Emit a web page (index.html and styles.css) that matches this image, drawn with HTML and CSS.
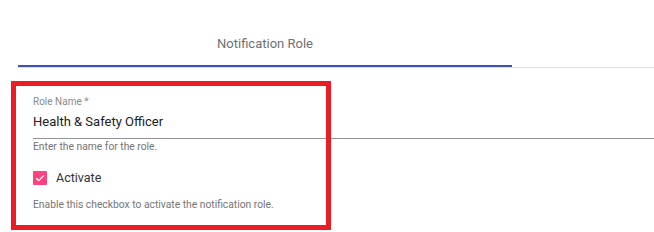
FILE: index.html
```html
<!DOCTYPE html>
<html>
<head>
<title>Notification Role</title>
<link rel="stylesheet" href="styles.css">
</head>
<body>
<div class="tabs">
  <div class="tab active">Notification Role</div>
</div>

<form class="role-form">
  <div class="field">
    <label class="field-label" for="role_name">Role Name *</label>
    <input type="text" id="role_name" class="field-input" value="Health &amp; Safety Officer">
    <div class="hint">Enter the name for the role.</div>
  </div>

  <label class="check">
    <span class="check-box">
      <svg width="10" height="10" viewBox="0 0 10 10"><path d="M1.2 5.2 L3.8 7.6 L8.8 2.4" fill="none" stroke="#fff" stroke-width="1.3"/></svg>
    </span>
    <span class="check-text">Activate</span>
  </label>
  <div class="hint">Enable this checkbox to activate the notification role.</div>
</form>

<!-- annotation around the form -->
<div class="highlight"></div>
</body>
</html>
```

FILE: styles.css
```css
body {
  margin: 0;
  font-family: Roboto, "Liberation Sans", sans-serif;
  background-color: #fff;
}

.tabs {
  display: flex;
  margin-left: 18px;
  border-bottom: 1px solid #e0e0e0;
}

.tab {
  width: 494px;
  height: 67px;
  box-sizing: border-box;
  display: flex;
  align-items: flex-end;
  justify-content: center;
  padding-bottom: 14px;
  font-size: 13px;
  color: #6f6f6f;
}

.tab.active {
  border-bottom: 2px solid #3f51b5;
}

.role-form {
  padding: 28px 0 0 33px;
}

.field-label {
  display: block;
  font-size: 10px;
  color: #8a8a8a;
  line-height: 12px;
}

.field-input {
  display: block;
  width: 100%;
  box-sizing: border-box;
  margin: 2px 0 0;
  padding: 4px 0 9px;
  border: none;
  border-bottom: 1px solid #949494;
  font-family: inherit;
  font-size: 13px;
  color: #212121;
  outline: none;
  background: none;
}

.hint {
  font-size: 10.3px;
  line-height: 12px;
  color: #757575;
  margin-top: 2px;
}

.check {
  display: flex;
  align-items: center;
  margin-top: 17px;
  margin-bottom: 14px;
}

.check-box {
  width: 14px;
  height: 14px;
  background-color: #ff4081;
  border-radius: 1px;
  display: flex;
  align-items: center;
  justify-content: center;
}

.check-text {
  margin-left: 9px;
  font-size: 12.5px;
  color: #333;
}

.highlight {
  position: absolute;
  left: 11px;
  top: 81px;
  width: 320px;
  height: 149px;
  box-sizing: border-box;
  border: 5px solid #ec1c24;
}
```
